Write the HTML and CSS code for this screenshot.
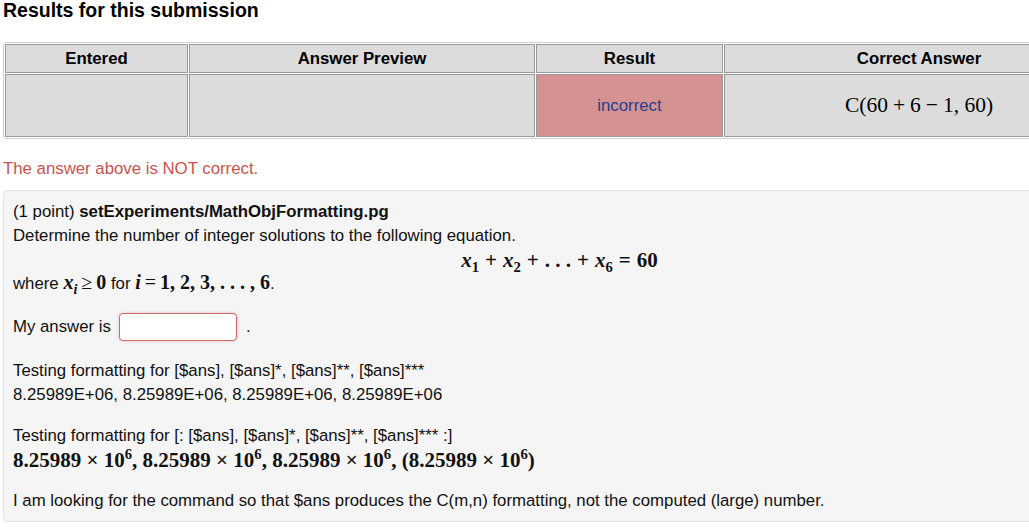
FILE: index.html
```html
<!DOCTYPE html>
<html lang="en">
<head>
    <meta charset="UTF-8">
    <title>Results for this submission</title>
    <link rel="stylesheet" href="styles.css">
</head>
<body>
    <div class="page">
        <h3 class="results-title">Results for this submission</h3>

        <table class="attempt-results">
            <tr>
                <th class="col-entered">Entered</th>
                <th class="col-preview">Answer Preview</th>
                <th class="col-result">Result</th>
                <th class="col-correct">Correct Answer</th>
            </tr>
            <tr class="answer-row">
                <td></td>
                <td></td>
                <td class="result-incorrect">incorrect</td>
                <td class="math">C(60<span class="op">+</span>6<span class="op">&minus;</span>1, 60)</td>
            </tr>
        </table>

        <div class="attempt-summary">The answer above is NOT correct.</div>

        <div class="problem">
            <p class="intro">
                (1 point) <b>setExperiments/MathObjFormatting.pg</b><br>
                Determine the number of integer solutions to the following equation.
            </p>
            <div class="display-eq math bold">
                <i>x</i><sub>1</sub><span class="op">+</span><i>x</i><sub>2</sub><span class="op">+</span>. . .<span class="op">+</span><i>x</i><sub>6</sub><span class="op">=</span>60
            </div>
            <p class="where">
                where <span class="math bold"><i>x</i><sub><i>i</i></sub><span class="op light">&ge;</span>0</span>
                for <span class="math bold"><i>i</i><span class="op light">=</span>1, 2, 3, . . . , 6</span>.
            </p>

            <div class="answer-line">
                <label for="AnSwEr0001">My answer is</label>
                <input type="text" id="AnSwEr0001" class="answer-input">
                <span>.</span>
            </div>

            <p class="first-note">
                Testing formatting for [$ans], [$ans]*, [$ans]**, [$ans]***<br>
                8.25989E+06, 8.25989E+06, 8.25989E+06, 8.25989E+06
            </p>

            <p>
                Testing formatting for [: [$ans], [$ans]*, [$ans]**, [$ans]*** :]
                <span class="math-line math bold">8.25989 &times; 10<sup>6</sup>, 8.25989 &times; 10<sup>6</sup>, 8.25989 &times; 10<sup>6</sup>, (8.25989 &times; 10<sup>6</sup>)</span>
            </p>

            <p>
                I am looking for the command so that $ans produces the C(m,n) formatting, not the computed (large) number.
            </p>
        </div>
    </div>
</body>
</html>
```

FILE: styles.css
```css
body {
    margin: 0;
    font-family: "Liberation Sans", Arial, sans-serif;
    font-size: 16.8px;
    color: #111;
    background-color: #fff;
    overflow-x: hidden;
}

.page {
    width: 1113px;
    padding-left: 3px;
}

.results-title {
    margin: 0;
    font-size: 19.5px;
    line-height: 20px;
    color: #000;
}

.attempt-results {
    margin-top: 22px;
    width: 1113px;
    border: 1px solid #cfcfcf;
    border-radius: 3px;
    border-spacing: 1px;
    table-layout: fixed;
}

.attempt-results th,
.attempt-results td {
    border: 1px solid #9a9a9a;
    background-color: #dcdcdc;
    text-align: center;
    padding: 0 4px;
}

.attempt-results th {
    height: 27px;
    font-weight: bold;
    color: #000;
}

.attempt-results td {
    height: 61px;
}

.col-entered { width: 173px; }
.col-preview { width: 336px; }
.col-result { width: 177px; }

.attempt-results td.result-incorrect {
    background-color: #d69292;
    color: #22408c;
}

.attempt-results td.math {
    font-size: 21.5px;
    color: #000;
}

.math {
    font-family: "Liberation Serif", "Times New Roman", serif;
}

.math .op {
    padding: 0 5px;
}

.bold {
    font-weight: bold;
}

.op.light {
    font-weight: normal;
}

.math sub,
.math sup {
    font-size: 70%;
    line-height: 0;
}

.attempt-summary {
    margin-top: 18px;
    line-height: 24px;
    color: #c9534f;
}

.problem {
    margin-top: 9px;
    padding: 9px 9px 8px;
    background-color: #f5f5f5;
    border: 1px solid #e3e3e3;
    border-radius: 4px;
    line-height: 24px;
}

.problem p {
    margin: 17px 0 0;
}

.problem p.first-note {
    margin-top: 18px;
}

.problem p.intro,
.problem p.where {
    margin: 0;
}

.display-eq {
    height: 24px;
    text-align: center;
    font-size: 21px;
    line-height: 24px;
}

.display-eq .op {
    padding: 0 6px;
}

.where .math {
    font-size: 20px;
    line-height: 0;
}

.where .op {
    padding: 0 4px;
}

.answer-line {
    display: flex;
    align-items: center;
    height: 28px;
    margin-top: 17px;
}

.answer-input {
    width: 118px;
    height: 28px;
    box-sizing: border-box;
    margin: 0 9px 0 8px;
    border: 1px solid #cf6a6a;
    border-radius: 4px;
    background-color: #fff;
    box-shadow: 0 0 3px rgba(205, 80, 80, 0.35);
}

.math-line {
    display: block;
    height: 24px;
    font-size: 21px;
    line-height: 24px;
}
```
